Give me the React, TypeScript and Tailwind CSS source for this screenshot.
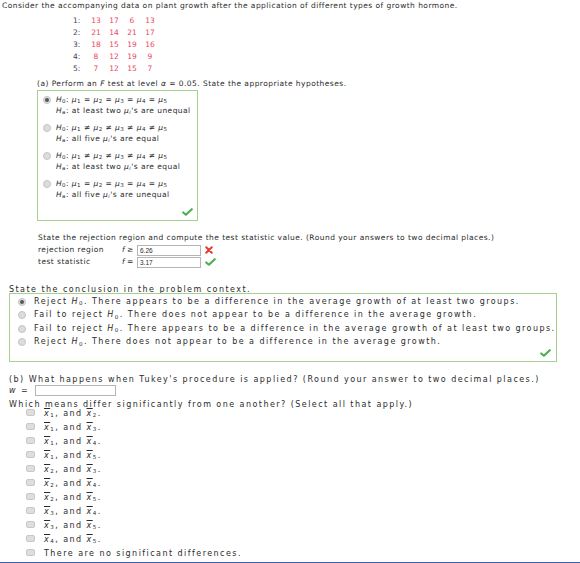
import type { ReactNode } from 'react';

const data = [
  [13, 17, 6, 13],
  [21, 14, 21, 17],
  [18, 15, 19, 16],
  [8, 12, 19, 9],
  [7, 12, 15, 7],
];

function Check({ className = '' }: { className?: string }) {
  return (
    <svg viewBox="0 0 12 9" className={`w-[11px] h-[8px] ${className}`}>
      <path d="M1.2 5 L4.2 7.6 L10.8 1.4" fill="none" stroke="#4caf50" strokeWidth="2.4" strokeLinecap="round" strokeLinejoin="round" />
    </svg>
  );
}

function Cross() {
  return (
    <svg viewBox="0 0 10 10" className="w-[8px] h-[8px]">
      <path d="M1.5 1.5 L8.5 8.5 M8.5 1.5 L1.5 8.5" stroke="#e53935" strokeWidth="2.4" strokeLinecap="round" />
    </svg>
  );
}

function Radio({ on = false }: { on?: boolean }) {
  return (
    <span className="inline-flex w-[8px] h-[8px] rounded-full bg-[#dcdcdc] border border-[#c4c4c4] items-center justify-center shrink-0">
      {on && <span className="w-[4px] h-[4px] rounded-full bg-[#555]" />}
    </span>
  );
}

function Box() {
  return <span className="inline-block w-[9px] h-[7px] rounded-[2px] bg-[#dedede] border border-[#c8c8c8] shrink-0" />;
}

const H = ({ s }: { s: string }) => (
  <>
    <i>H</i>
    <sub className="text-[5.5px] not-italic">{s}</sub>
  </>
);

const Mu = ({ s }: { s: string }) => (
  <>
    <i>μ</i>
    <sub className="text-[5.5px]">{s}</sub>
  </>
);

function MuChain({ op }: { op: string }) {
  return (
    <>
      <Mu s="1" /> {op} <Mu s="2" /> {op} <Mu s="3" /> {op} <Mu s="4" /> {op} <Mu s="5" />
    </>
  );
}

const Xb = ({ s }: { s: string }) => (
  <>
    <i className="overline">x</i>
    <sub className="text-[5.5px]">{s}</sub>
  </>
);

const mui = (
  <>
    <i>μ</i>
    <sub className="text-[5px]">
      <i>i</i>
    </sub>
  </>
);

const hypotheses: { op: string; ha: ReactNode; on?: boolean }[] = [
  { op: '=', ha: <>at least two {mui}'s are unequal</>, on: true },
  { op: '≠', ha: <>all five {mui}'s are equal</> },
  { op: '≠', ha: <>at least two {mui}'s are equal</> },
  { op: '=', ha: <>all five {mui}'s are unequal</> },
];

const conclusions: { a: string; b: string; on?: boolean }[] = [
  { a: 'Reject', b: 'There appears to be a difference in the average growth of at least two groups.', on: true },
  { a: 'Fail to reject', b: 'There does not appear to be a difference in the average growth.' },
  { a: 'Fail to reject', b: 'There appears to be a difference in the average growth of at least two groups.' },
  { a: 'Reject', b: 'There does not appear to be a difference in the average growth.' },
];

const pairs = [
  ['1', '2'], ['1', '3'], ['1', '4'], ['1', '5'], ['2', '3'],
  ['2', '4'], ['2', '5'], ['3', '4'], ['3', '5'], ['4', '5'],
];

export default function App() {
  return (
    <div className="relative w-[580px] h-[563px] bg-white overflow-hidden text-[#2b2b2b] text-[7.5px] leading-[12px] font-['DejaVu_Sans',Verdana,sans-serif]">
      <div className="tracking-[0.45px]">
        <p className="pl-[2px] h-[12px]">
          Consider the accompanying data on plant growth after the application of different types of growth hormone.
        </p>

        {/* data */}
        <div className="mt-[3px] ml-[73px] tracking-normal">
          {data.map((row, i) => (
            <div key={i} className="flex h-[12px]">
              <span className="w-[14px] text-[#445]">{i + 1}:</span>
              {row.map((n, j) => (
                <span key={j} className="w-[18px] text-center text-[#e8485e]">{n}</span>
              ))}
            </div>
          ))}
        </div>

        {/* (a) */}
        <p className="mt-[3px] ml-[37px] h-[12px]">
          (a) Perform an <i>F</i> test at level <i>α</i> = 0.05. State the appropriate hypotheses.
        </p>
        <div className="relative ml-[37px] w-[161px] h-[131px] border border-[#a5d08f] pt-[3px]">
          {hypotheses.map((h, i) => (
            <div key={i} className="h-[28px] flex items-start">
              <div className="w-[18px] h-[11px] flex items-center justify-center">
                <Radio on={h.on} />
              </div>
              <div className="leading-[11px]">
                <div className="whitespace-nowrap">
                  <H s="0" />: <MuChain op={h.op} />
                </div>
                <div className="whitespace-nowrap">
                  <H s="a" />: {h.ha}
                </div>
              </div>
            </div>
          ))}
          <Check className="absolute right-[4px] bottom-[4px]" />
        </div>

        <p className="mt-[11px] ml-[38px] h-[12px]">
          State the rejection region and compute the test statistic value. (Round your answers to two decimal places.)
        </p>
        <div className="ml-[38px]">
          {[
            { label: 'rejection region', op: '≥', v: '6.26', ok: false },
            { label: 'test statistic', op: '=', v: '3.17', ok: true },
          ].map((r) => (
            <div key={r.label} className="flex items-center h-[12px]">
              <span className="w-[84px]">{r.label}</span>
              <span className="w-[15px] tracking-normal">
                <i>f</i> {r.op}
              </span>
              <span className="w-[64px] h-[11px] border border-[#b5b5b5] pl-[2px] leading-[9px] tracking-normal text-[6.5px] font-['Liberation_Sans',sans-serif]">
                {r.v}
              </span>
              <span className="ml-[4px] flex items-center">{r.ok ? <Check /> : <Cross />}</span>
            </div>
          ))}
        </div>
      </div>

      <div className="text-[8px] tracking-[1.45px]">
        {/* conclusion */}
        <p className="mt-[16px] ml-[9px] h-[9px]">State the conclusion in the problem context.</p>
        <div className="relative ml-[9px] w-[548px] h-[69px] border border-[#a5d08f] pt-[1px]">
          {conclusions.map((c, i) => (
            <div key={i} className="flex items-center h-[13.5px]">
              <div className="w-[24px] flex justify-center">
                <Radio on={c.on} />
              </div>
              <span className="whitespace-nowrap">
                {c.a} <H s="0" />. {c.b}
              </span>
            </div>
          ))}
          <Check className="absolute right-[5px] bottom-[4px]" />
        </div>

        {/* (b) */}
        <p className="mt-[12px] ml-[9px] h-[12px]">
          (b) What happens when Tukey's procedure is applied? (Round your answer to two decimal places.)
        </p>
        <div className="ml-[9px] flex items-center h-[11px] -mt-[1px]">
          <span className="w-[26px]">
            <i>w</i> =
          </span>
          <span className="w-[81px] h-[11px] border border-[#b5b5b5]" />
        </div>
        <p className="mt-[3px] ml-[9px] h-[12px]">
          Which means differ significantly from one another? (Select all that apply.)
        </p>
        <div className="ml-[26px] -mt-[4px]">
          {pairs.map(([a, b]) => (
            <div key={a + b} className="flex items-center h-[14px]">
              <div className="w-[18px]">
                <Box />
              </div>
              <span className="whitespace-nowrap">
                <Xb s={a} />, and <Xb s={b} />.
              </span>
            </div>
          ))}
          <div className="flex items-center h-[14px]">
            <div className="w-[18px]">
              <Box />
            </div>
            <span>There are no significant differences.</span>
          </div>
        </div>
        <div className="mt-[1px] h-[2px] bg-[#3a64a8]" />
      </div>
    </div>
  );
}
